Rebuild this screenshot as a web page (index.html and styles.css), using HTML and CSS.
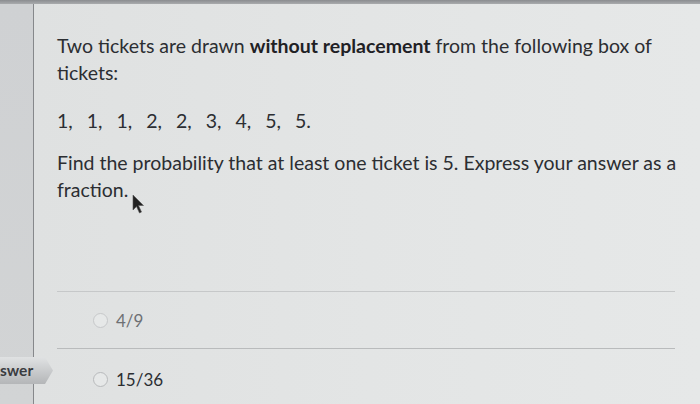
FILE: index.html
```html
<!DOCTYPE html>
<html>
<head>
<meta charset="utf-8">
<link rel="stylesheet" href="styles.css">
</head>
<body>
<div class="topbar"></div>
<div class="page">
  <div class="gutter">
    <div class="tab">swer</div>
  </div>
  <div class="card">
    <div class="question">
      <p class="para first">Two tickets are drawn <b>without replacement</b> from the following box of tickets:</p>
      <p class="para nums"><span>1,</span><span>1,</span><span>1,</span><span>2,</span><span>2,</span><span>3,</span><span>4,</span><span>5,</span><span>5.</span></p>
      <p class="para">Find the probability that at least one ticket is 5. Express your answer as a fraction.</p>
      <svg class="cursor" width="14" height="20" viewBox="0 0 14 20"><path d="M2 1 L2 16 L5.5 12.5 L8.5 19 L10.5 18 L7.5 11.5 L12.5 11.5 Z" fill="#222" stroke="#555" stroke-width="0.6"/></svg>
    </div>
    <div class="answers">
      <div class="option faded"><span class="radio"></span><span class="label">4/9</span></div>
      <div class="option"><span class="radio"></span><span class="label">15/36</span></div>
    </div>
  </div>
</div>
</body>
</html>
```
FILE: styles.css
```css
html, body {
  margin: 0;
  padding: 0;
  width: 700px;
  height: 404px;
  overflow: hidden;
}
body {
  background: #dcdedf;
  font-family: Lato, "Open Sans", sans-serif;
  color: #2c2e32;
}
.topbar {
  height: 4px;
  background: linear-gradient(to bottom, #8b8d90, #a9abad);
}
.page {
  display: flex;
  height: 400px;
}
.gutter {
  width: 33px;
  flex: none;
  background: linear-gradient(to bottom, #cfd1d3, #d2d4d5);
  border-right: 1px solid #86888b;
  position: relative;
}
.tab {
  position: absolute;
  left: -4px;
  top: 353px;
  height: 27px;
  width: 57px;
  padding-left: 4px;
  box-sizing: border-box;
  background: linear-gradient(to bottom, #e0e2e3, #b4b6b8);
  clip-path: polygon(0 0, 86% 0, 100% 50%, 86% 100%, 0 100%);
  font-size: 15.5px;
  font-weight: 700;
  color: #3a3c40;
  line-height: 26px;
}
.card {
  flex: 1;
  background: linear-gradient(to right, #dfe1e1 0%, #e3e5e5 50%, #e6e8e8 100%);
  padding: 28px 24px 0 23px;
}
.question {
  position: relative;
  height: 259px;
}
.para {
  margin: 0 0 15px 0;
  font-size: 19.5px;
  line-height: 27px;
  width: 620px;
}
.para.first {
  margin-bottom: 21px;
}
.para b {
  font-weight: 700;
  color: #1f2125;
}
.nums span {
  margin-right: 14px;
}
.cursor {
  position: absolute;
  left: 74px;
  top: 162px;
}
.answers {
  border-top: 1px solid #c6c8c9;
  margin-right: 2px;
}
.option {
  display: flex;
  align-items: center;
  gap: 8px;
  padding-left: 36px;
  height: 56px;
  border-bottom: 1px solid #b9bbbc;
  font-size: 17px;
}
.option:last-child {
  border-bottom: none;
  height: 60px;
}
.radio {
  width: 13px;
  height: 13px;
  border-radius: 50%;
  border: 1px solid #b8babc;
  background: #e6e8e8;
}
.faded .label {
  color: #6e7074;
}
.faded .radio {
  border-color: #c6c8ca;
}
```
